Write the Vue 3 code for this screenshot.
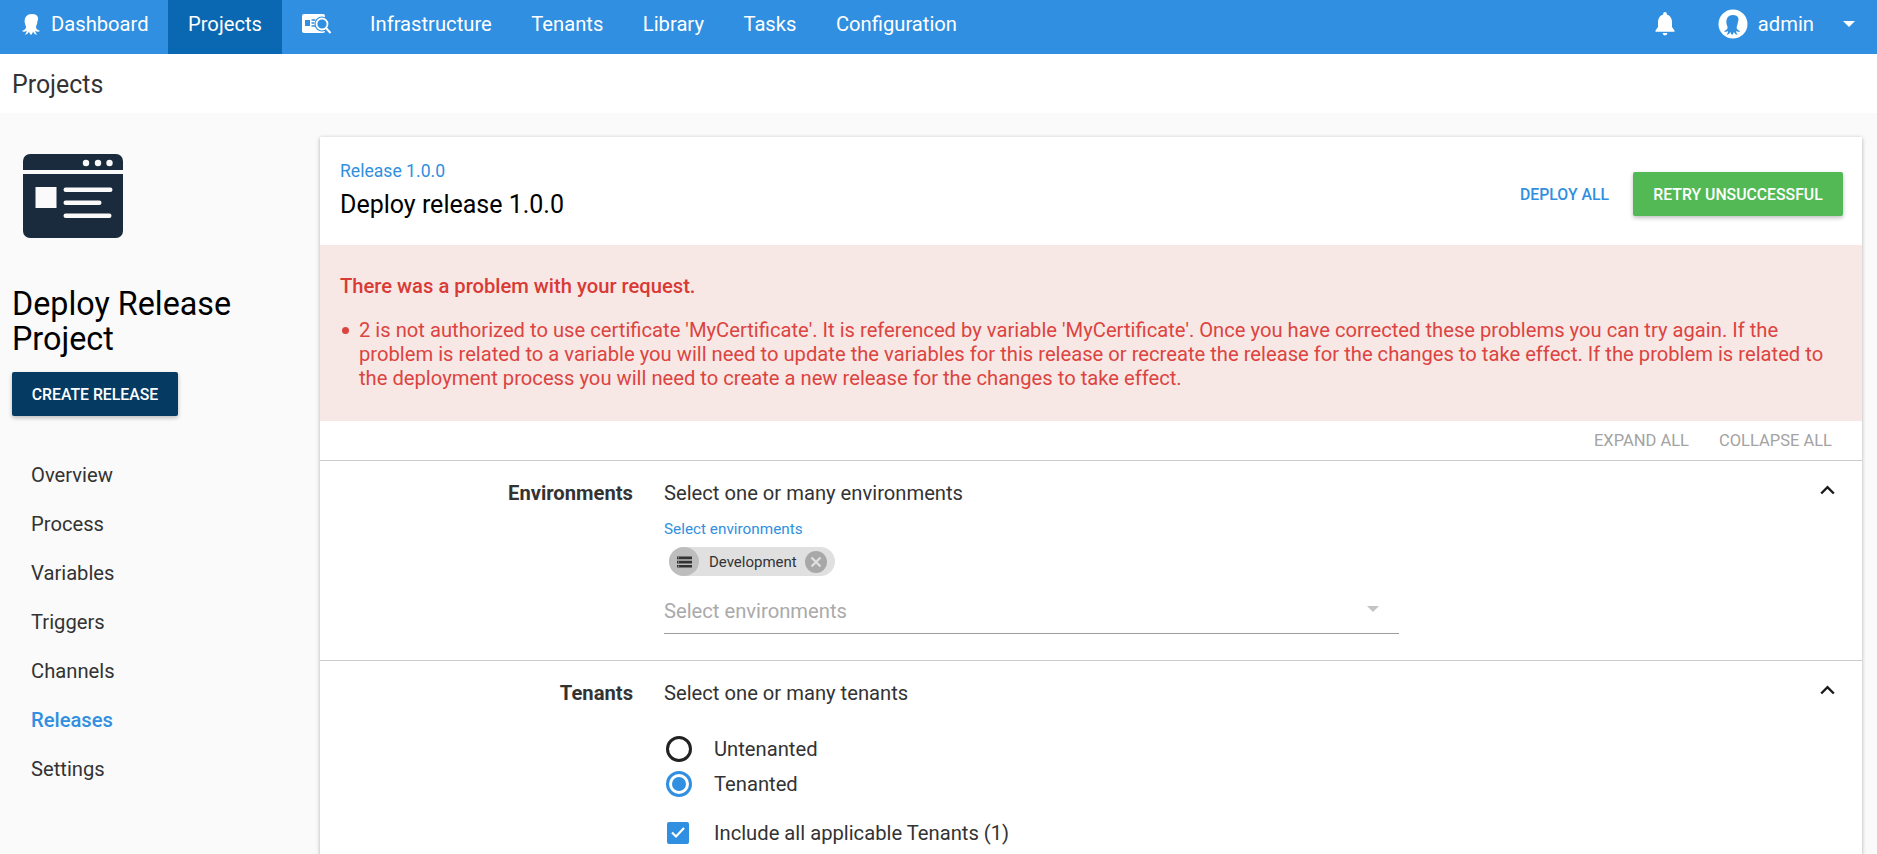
<script setup>
const navItems = [
  { label: 'Infrastructure', w: 'w-item' },
  { label: 'Tenants', w: 'w-item' },
  { label: 'Library', w: 'w-item' },
  { label: 'Tasks', w: 'w-item' },
  { label: 'Configuration', w: 'w-item' },
]
const sideLinks = ['Overview', 'Process', 'Variables', 'Triggers', 'Channels', 'Releases', 'Settings']
const octo = 'M10 0C4.800 0 2.600 3.400 2.600 7.400c0 2.800 1.400 4.200 1.400 5.800 0 1.800-2 3-4 3.800 1.300 1 3.200.8 4.600-.2 0 1.600-.8 3-1.800 4 2 0 3.500-1.400 4.200-3.200.3 1.300 1 2.600 2 3.400 1-.8 1.700-2.100 2-3.400.7 1.800 2.200 3.200 4.200 3.200-1-1-1.800-2.400-1.800-4 1.400 1 3.300 1.200 4.600.2-2-.8-4-2-4-3.800 0-1.600 1.400-3 1.400-5.800C17.400 3.400 15.200 0 10 0z'
</script>

<template>
  <div class="page">
    <header class="topbar">
      <div class="tab tab-dash">
        <svg class="octo" viewBox="0 0 20 21"><path :d="octo" fill="#fff"/></svg>
        <span>Dashboard</span>
      </div>
      <div class="tab tab-active">Projects</div>
      <div class="tab tab-search">
        <svg width="29" height="22" viewBox="0 0 29 22"><rect x="0" y="1" width="23" height="19" rx="2" fill="#fff"/><rect x="3" y="7" width="5" height="6" fill="#308fe0"/><path d="M9.500 7h4M9.500 10h3M9.500 13h4" stroke="#308fe0" stroke-width="1.300"/><circle cx="20" cy="11" r="7.500" fill="#308fe0"/><circle cx="20" cy="11" r="5.500" fill="none" stroke="#fff" stroke-width="1.800"/><path d="M24 15l4.500 5" stroke="#fff" stroke-width="2"/></svg>
      </div>
      <div v-for="item in navItems" :key="item.label" class="tab" :class="item.w">{{ item.label }}</div>
      <div class="right">
        <svg class="bell" width="20" height="24" viewBox="0 0 20 24"><path d="M10 0c-1.100 0-1.800.8-1.800 1.800v.6C4.800 3.400 3 6.300 3 9.800V15L.5 18.500v1.300h19v-1.300L17 15V9.800c0-3.500-1.800-6.400-5.200-7.400v-.6C11.800.8 11.100 0 10 0zM7.600 21a2.400 2.400 0 0 0 4.800 0z" fill="#fff"/></svg>
        <svg class="avatar" width="30" height="30" viewBox="0 0 30 30"><circle cx="15" cy="15" r="14.500" fill="#fff"/><path :d="octo" fill="#308fe0" transform="translate(6 6) scale(.9 .95)"/></svg>
        <span class="admin">admin</span>
        <span class="caret"></span>
      </div>
    </header>

    <div class="crumb">Projects</div>

    <div class="body">
      <aside class="side">
        <svg class="logo" width="100" height="84" viewBox="0 0 100 84">
          <path d="M7 0h86a7 7 0 0 1 7 7v9H0V7a7 7 0 0 1 7-7z" fill="#1b2b3e"/>
          <path d="M0 20h100v57a7 7 0 0 1-7 7H7a7 7 0 0 1-7-7z" fill="#1b2b3e"/>
          <circle cx="63" cy="9" r="3.200" fill="#fafafa"/><circle cx="75" cy="9" r="3.200" fill="#fafafa"/><circle cx="86.500" cy="9" r="3.200" fill="#fafafa"/>
          <rect x="12.500" y="33" width="21" height="21" fill="#fafafa"/>
          <rect x="40.500" y="33.500" width="49" height="4.400" rx="2.200" fill="#fafafa"/>
          <rect x="40.500" y="46.500" width="38" height="4.400" rx="2.200" fill="#fafafa"/>
          <rect x="40.500" y="59.500" width="48" height="4.400" rx="2.200" fill="#fafafa"/>
        </svg>
        <h1 class="proj">Deploy Release Project</h1>
        <div class="btn-create">CREATE RELEASE</div>
        <nav class="side-nav">
          <div v-for="l in sideLinks" :key="l" class="side-link" :class="{ on: l === 'Releases' }">{{ l }}</div>
        </nav>
      </aside>

      <main class="card">
        <div class="card-head">
          <div>
            <div class="rel-link">Release 1.0.0</div>
            <div class="rel-title">Deploy release 1.0.0</div>
          </div>
          <div class="head-actions">
            <span class="deploy-all">DEPLOY ALL</span>
            <span class="btn-retry">RETRY UNSUCCESSFUL</span>
          </div>
        </div>

        <div class="err">
          <div class="err-title">There was a problem with your request.</div>
          <ul class="err-list">
            <li>2 is not authorized to use certificate 'MyCertificate'. It is referenced by variable 'MyCertificate'. Once you have corrected these problems you can try again. If the problem is related to a variable you will need to update the variables for this release or recreate the release for the changes to take effect. If the problem is related to the deployment process you will need to create a new release for the changes to take effect.</li>
          </ul>
        </div>

        <div class="expand-row">
          <span>EXPAND ALL</span>
          <span>COLLAPSE ALL</span>
        </div>

        <section class="sec sec-env">
          <div class="sec-label">Environments</div>
          <div class="sec-main">
            <div class="sec-sub">Select one or many environments</div>
            <div class="float-label">Select environments</div>
            <div class="chip">
              <span class="chip-ico">
                <svg width="15" height="12" viewBox="0 0 15 12"><path d="M0 .500h15v2.700H0zM0 4.700h15v2.700H0zM0 8.900h15v2.700H0z" fill="#333"/><path d="M1 1.300h1v1H1zM1 5.500h1v1H1zM1 9.700h1v1H1z" fill="#bbb"/></svg>
              </span>
              <span class="chip-text">Development</span>
              <span class="chip-x">
                <svg width="12" height="12" viewBox="0 0 12 12"><path d="M1.500 1.500l9 9M10.500 1.500l-9 9" stroke="#e0e0e0" stroke-width="2.200"/></svg>
              </span>
            </div>
            <div class="select">
              <span>Select environments</span>
              <span class="select-caret"></span>
            </div>
          </div>
          <svg class="chev" width="15" height="10" viewBox="0 0 15 10"><path d="M1.200 8.500L7.500 2.200l6.300 6.300" fill="none" stroke="#1a1a1a" stroke-width="2.400"/></svg>
        </section>

        <section class="sec sec-ten">
          <div class="sec-label">Tenants</div>
          <div class="sec-main">
            <div class="sec-sub">Select one or many tenants</div>
            <div class="radios">
              <div class="opt"><span class="radio"></span><span>Untenanted</span></div>
              <div class="opt"><span class="radio radio-on"><i></i></span><span>Tenanted</span></div>
            </div>
            <div class="opt opt-check">
              <span class="check">
                <svg width="16" height="13" viewBox="0 0 16 13"><path d="M2 6.500l4 4 8-8.500" fill="none" stroke="#fff" stroke-width="2.200"/></svg>
              </span>
              <span>Include all applicable Tenants (1)</span>
            </div>
          </div>
          <svg class="chev" width="15" height="10" viewBox="0 0 15 10"><path d="M1.200 8.500L7.500 2.200l6.300 6.300" fill="none" stroke="#1a1a1a" stroke-width="2.400"/></svg>
        </section>
      </main>
    </div>
  </div>
</template>

<style>
html, body { margin: 0; overflow: hidden; background: #fafafa; }
</style>

<style scoped>
.page { width: 1877px; height: 854px; overflow: hidden; font-family: Roboto, sans-serif; background: #fafafa; color: #333; }
.topbar { height: 54px; background: #308fe0; display: flex; color: #fff; font-size: 20.200px; }
.tab { display: flex; align-items: center; height: 48px; box-sizing: border-box; }
.tab-dash { width: 168px; padding-left: 22px; gap: 9px; }
.octo { width: 20px; height: 21px; }
.tab-active { width: 114px; height: 54px; padding-bottom: 6px; justify-content: center; background: #0a67b1; }
.tab-search { width: 88px; padding-left: 20px; }
.w-item { margin-right: 39.500px; }
.right { margin-left: auto; display: flex; align-items: center; height: 48px; padding-right: 22px; }
.bell { margin-right: 43px; }
.avatar { margin-right: 10px; }
.admin { margin-right: 29px; }
.caret { width: 0; height: 0; border-left: 6px solid transparent; border-right: 6px solid transparent; border-top: 6px solid #fff; }
.crumb { height: 59px; background: #fff; padding: 1px 0 0 12px; font-size: 24.900px; line-height: 59px; box-sizing: border-box; color: #333; }
.body { display: flex; align-items: flex-start; padding-top: 24px; }
.side { width: 320px; flex: none; box-sizing: border-box; padding-left: 12px; padding-right: 60px; }
.logo { display: block; margin: 17px 0 0 11px; }
.proj { font-size: 32.300px; font-weight: 400; line-height: 35px; margin: 49px 0 0; color: #000; }
.btn-create { width: 166px; height: 44px; margin-top: 15px; background: #053b63; color: #fff; border-radius: 2px; font-size: 15.800px; font-weight: 500; display: flex; align-items: center; justify-content: center; box-shadow: 0 2px 4px rgba(0,0,0,.25); }
.side-nav { margin-top: 35px; }
.side-link { height: 49px; line-height: 49px; padding-left: 19px; font-size: 20.200px; color: #333; }
.side-link.on { color: #308fe0; font-weight: 500; }
.card { width: 1542px; flex: none; background: #fff; box-shadow: 0 1px 4px rgba(0,0,0,.3); }
.card-head { height: 108px; display: flex; justify-content: space-between; align-items: center; padding: 0 19px 0 20px; box-sizing: border-box; }
.rel-link { color: #308fe0; font-size: 17.600px; line-height: 20px; margin-top: -3px; }
.rel-title { color: #000; font-size: 25px; line-height: 28px; margin-top: 10px; }
.head-actions { display: flex; align-items: center; gap: 24px; margin-top: 6px; }
.deploy-all { color: #308fe0; font-size: 15.800px; font-weight: 500; }
.btn-retry { width: 210px; height: 44px; background: #52b954; color: #fff; border-radius: 2px; font-size: 15.800px; font-weight: 500; display: flex; align-items: center; justify-content: center; box-shadow: 0 2px 4px rgba(0,0,0,.25); }
.err { height: 176px; box-sizing: border-box; background: #f7e8e6; color: #dc4440; padding: 29px 20px 0 20px; font-size: 20.200px; }
.err-title { font-weight: 500; font-size: 20.200px; line-height: 24px; color: #d93a35; }
.err-list { margin: 20px 0 0; padding: 0 0 0 19px; line-height: 24px; font-size: 20.200px; list-style: none; }
.err-list li { position: relative; }
.err-list li::before { content: ""; position: absolute; left: -17px; top: 9px; width: 7px; height: 7px; border-radius: 50%; background: #dc4440; }
.expand-row { display: flex; justify-content: flex-end; align-items: center; gap: 30px; padding-right: 30px; border-bottom: 1px solid #ccc; color: #a3a3a3; font-size: 16.500px; font-weight: 400; height: 39px; }
.sec { display: flex; position: relative; }
.sec-env { height: 199px; border-bottom: 1px solid #ccc; }
.sec-label { width: 313px; flex: none; text-align: right; font-weight: 700; font-size: 20.200px; padding-top: 20px; line-height: 24px; }
.sec-main { margin-left: 31px; padding-top: 20px; width: 735px; }
.sec-sub { font-size: 20.200px; line-height: 24px; }
.float-label { color: #308fe0; font-size: 15.300px; line-height: 20px; margin-top: 14px; }
.chip { display: inline-flex; align-items: center; height: 29px; margin: 8px 0 0 5px; background: #e0e0e0; border-radius: 15px; }
.chip-ico { width: 30px; height: 29px; border-radius: 50%; background: #bdbdbd; display: flex; align-items: center; justify-content: center; }
.chip-text { font-size: 15px; margin: 0 8px 0 10px; }
.chip-x { width: 22px; height: 22px; border-radius: 50%; background: #a8a8a8; display: flex; align-items: center; justify-content: center; margin-right: 8px; }
.select { display: flex; justify-content: space-between; align-items: center; height: 49px; margin-top: 9px; padding-top: 3px; border-bottom: 1px solid #9e9e9e; color: #aaa; font-size: 20.200px; padding-right: 20px; box-sizing: border-box; }
.select-caret { width: 0; height: 0; border-left: 6px solid transparent; border-right: 6px solid transparent; border-top: 6px solid #c4c4c4; margin-top: -4px; }
.chev { position: absolute; right: 27px; top: 24px; }
.sec-ten { height: 260px; }
.radios { margin-top: 26px; }
.opt { display: flex; align-items: center; height: 35px; font-size: 20.200px; gap: 22px; }
.opt-check { margin-top: 14px; gap: 23px; }
.radio { width: 26px; height: 26px; margin-left: 2px; border: 3px solid #222; border-radius: 50%; box-sizing: border-box; display: flex; align-items: center; justify-content: center; }
.radio-on { border-color: #308fe0; }
.radio-on i { width: 14px; height: 14px; border-radius: 50%; background: #308fe0; }
.check { width: 22px; height: 22px; margin-left: 3px; margin-right: 2px; background: #308fe0; border-radius: 2px; display: flex; align-items: center; justify-content: center; }
</style>
